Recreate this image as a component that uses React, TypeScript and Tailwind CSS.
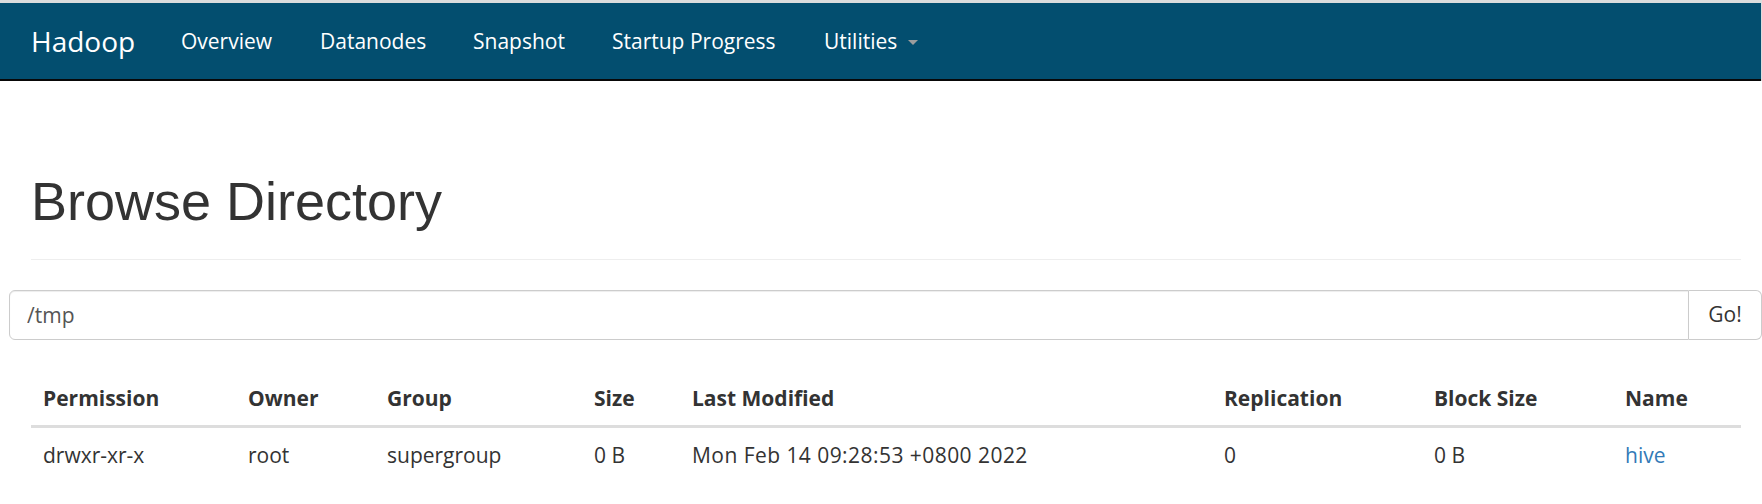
import React from "react";

const cols = [
  { h: "Permission", w: "w-[205px]", v: "drwxr-xr-x" },
  { h: "Owner", w: "w-[139px]", v: "root" },
  { h: "Group", w: "w-[207px]", v: "supergroup" },
  { h: "Size", w: "w-[98px]", v: "0 B" },
  { h: "Last Modified", w: "w-[532px]", v: "Mon Feb 14 09:28:53 +0800 2022" },
  { h: "Replication", w: "w-[210px]", v: "0" },
  { h: "Block Size", w: "w-[191px]", v: "0 B" },
  { h: "Name", w: "w-[128px]", v: "hive" },
];

const navItems = [
  { t: "Overview", w: "w-[94px]" },
  { t: "Datanodes", w: "w-[108px]" },
  { t: "Snapshot", w: "w-[94px]" },
  { t: "Startup Progress", w: "w-[167px]" },
];

export default function App() {
  return (
    <div className="min-h-screen w-[1762px] bg-white font-['Open_Sans',sans-serif] text-[#333] text-[21px]">
      <div className="bg-[#dcdcdc] pt-[3px] pr-[1px]">
        <nav className="h-[78px] bg-[#034e6f] border-b-2 border-[#080808] flex items-center pl-[8.5px]">
          <a className="px-[22.5px] text-[28px] leading-[30px] text-white w-[150px] whitespace-nowrap">
            Hadoop
          </a>
          <ul className="flex items-center">
            {navItems.map((n) => (
              <li key={n.t} className="px-[22.5px]">
                <a className={`${n.w} block leading-[30px] text-white whitespace-nowrap`}>{n.t}</a>
              </li>
            ))}
            <li className="px-[22.5px] flex items-center">
              <a className="w-[75px] block leading-[30px] text-white whitespace-nowrap">Utilities</a>
              <span className="ml-[9px] mt-[2px] w-0 h-0 border-t-[5px] border-x-[5px] border-t-[#9d9d9d] border-x-transparent" />
            </li>
          </ul>
        </nav>
      </div>

      <div className="pl-[31px] pr-[21px]">
        <div className="pb-[28px] border-b border-[#eee]">
          <h1 className="mt-[91px] font-['Liberation_Sans',Arial,sans-serif] text-[54px] leading-[59px] text-[#333] font-normal">
            Browse Directory
          </h1>
        </div>
      </div>

      <div className="flex ml-[9px] mt-[30px] h-[50px]">
        <input
          readOnly
          defaultValue="/tmp"
          className="flex-1 min-w-0 h-[50px] border border-[#ccc] rounded-l-[6px] px-[17px] text-[21px] text-[#555] shadow-[inset_0_1px_1px_rgba(0,0,0,0.075)] outline-none bg-white"
        />
        <button className="w-[73px] h-[50px] flex items-center justify-center border border-l-0 border-[#ccc] rounded-r-[6px] text-[21px] text-[#333] bg-white">
          Go!
        </button>
      </div>

      <table className="table-fixed border-separate border-spacing-0 w-[1710px] ml-[31px] mt-[31px]">
        <thead>
          <tr>
            {cols.map((c) => (
              <th
                key={c.h}
                className={`${c.w} text-left font-bold px-[12px] py-[12px] leading-[30px] border-b-[3px] border-[#ddd] align-bottom whitespace-nowrap`}
              >
                {c.h}
              </th>
            ))}
          </tr>
        </thead>
        <tbody>
          <tr>
            {cols.map((c) => (
              <td key={c.h} className="px-[12px] py-[12px] leading-[30px] whitespace-nowrap">
                {c.h === "Name" ? (
                  <a className="text-[#337ab7]">{c.v}</a>
                ) : c.h === "Last Modified" ? (
                  <span className="tracking-[0.45px]">{c.v}</span>
                ) : (
                  c.v
                )}
              </td>
            ))}
          </tr>
        </tbody>
      </table>
    </div>
  );
}
